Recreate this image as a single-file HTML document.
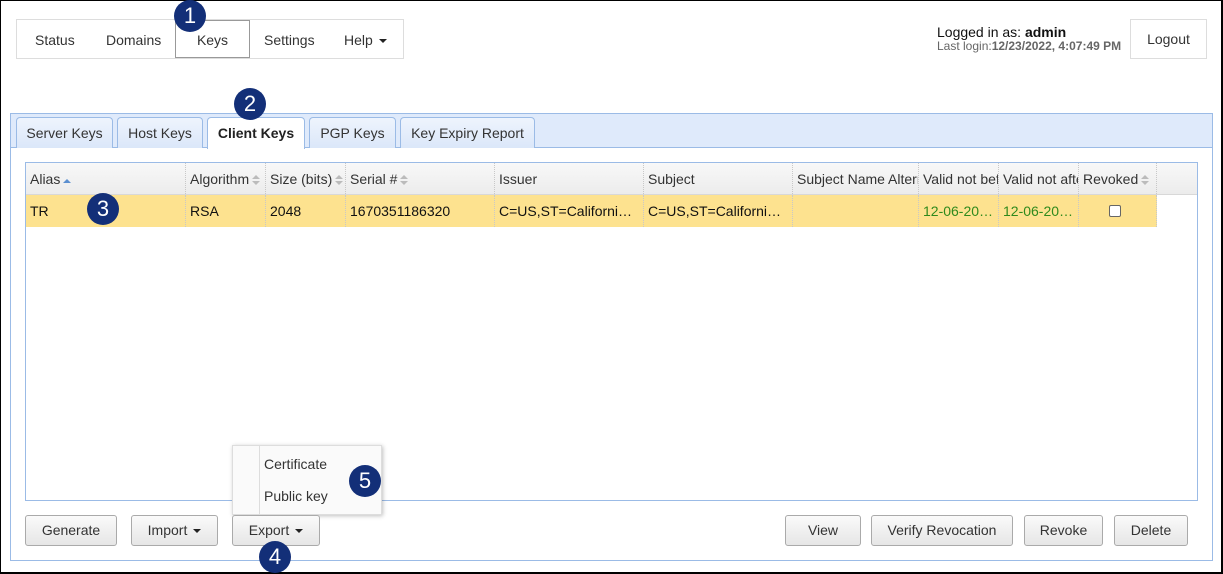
<!DOCTYPE html>
<html><head><meta charset="utf-8"><style>
*{box-sizing:border-box;margin:0;padding:0}
body{width:1223px;height:574px;position:relative;background:#fff;font-family:"Liberation Sans",Arial,sans-serif;font-size:14px;color:#333;overflow:hidden}
.a{position:absolute}
.frame{left:0;top:0;width:1223px;height:574px;border:2px solid #000;border-top-width:1px;border-left-width:1px}
.nav{left:16px;top:19px;width:388px;height:40px;border:1px solid #ddd}
.nav span{position:absolute;top:12px;font-size:14px;color:#333}
.keys{left:175px;top:20px;width:75px;height:38px;border:1px solid #999;text-align:center;line-height:38px}
.badge{width:32px;height:32px;border-radius:50%;background:#132f78;color:#fff;font-size:22px;text-align:center;line-height:32px}
.caret{display:inline-block;width:0;height:0;border-left:4px solid transparent;border-right:4px solid transparent;border-top:4px solid #222;vertical-align:middle;margin-left:6px}
.panel{left:10px;top:113px;width:1203px;height:448px;border:1px solid #9bbbe6}
.phead{left:11px;top:114px;width:1201px;height:34px;background:#dfeafb;border-bottom:1px solid #9bbbe6}
.tab{position:absolute;top:117px;height:31px;border:1px solid #9bbbe6;border-bottom:none;border-radius:4px 4px 0 0;background:linear-gradient(#eef4fd,#dbe7f9);text-align:center;line-height:30px;color:#333}
.tab.act{background:#fff;height:32px;font-weight:bold;color:#222}
.grid{left:25px;top:162px;width:1173px;height:339px;border:1px solid #9bbbe6}
.gh{left:26px;top:163px;width:1171px;height:32px;background:linear-gradient(#f8f8f8,#ececec);border-bottom:1px solid #d8d8d8}
.row{left:26px;top:195px;width:1131px;height:32px;background:#fde28f}
.c{position:absolute;top:0;height:100%;border-right:1px dotted #c8c8c8;padding-left:4px;line-height:32px;white-space:nowrap;overflow:hidden}
.sa{display:inline-block;width:8px;vertical-align:middle;margin-left:3px}
.btn{position:absolute;top:515px;height:31px;border:1px solid #aaa;border-radius:3px;background:linear-gradient(#fafafa,#e6e6e6);text-align:center;line-height:29px;color:#333}
.menu{left:232px;top:445px;width:150px;height:70px;background:#fafafa;border:1px solid #ddd;box-shadow:1px 1px 4px rgba(0,0,0,.25)}
</style></head><body>
<div class="a frame"></div>
<div class="a nav"><span style="left:18px">Status</span><span style="left:89px">Domains</span><span style="left:247px">Settings</span><span style="left:327px">Help<i class="caret"></i></span></div>
<div class="a keys">Keys</div>
<div class="a badge" style="left:174px;top:0px">1</div>
<div class="a" style="left:937px;top:24px;font-size:14px;color:#111">Logged in as: <b>admin</b></div>
<div class="a" style="left:937px;top:39px;font-size:12px;color:#666">Last login:<b>12/23/2022, 4:07:49 PM</b></div>
<div class="a" style="left:1130px;top:19px;width:77px;height:40px;border:1px solid #ddd;text-align:center;line-height:38px;color:#333">Logout</div>

<div class="a panel"></div>
<div class="a phead"></div>
<div class="tab" style="left:16px;width:97px">Server Keys</div>
<div class="tab" style="left:117px;width:86px">Host Keys</div>
<div class="tab act" style="left:207px;width:98px">Client Keys</div>
<div class="tab" style="left:309px;width:87px">PGP Keys</div>
<div class="tab" style="left:400px;width:135px">Key Expiry Report</div>
<div class="a badge" style="left:234px;top:88px">2</div>

<div class="a grid"></div>
<div class="a gh">
<div class="c" style="left:0;width:160px">Alias<svg class="sa" width="8" height="5"><path d="M0 5L4 1L8 5Z" fill="#5b8fd0"/></svg></div>
<div class="c" style="left:160px;width:80px">Algorithm<svg class="sa" width="8" height="10"><path d="M0 4L4 0L8 4ZM0 6L4 10L8 6Z" fill="#bbb"/></svg></div>
<div class="c" style="left:240px;width:80px">Size (bits)<svg class="sa" width="8" height="10"><path d="M0 4L4 0L8 4ZM0 6L4 10L8 6Z" fill="#bbb"/></svg></div>
<div class="c" style="left:320px;width:149px">Serial #<svg class="sa" width="8" height="10"><path d="M0 4L4 0L8 4ZM0 6L4 10L8 6Z" fill="#bbb"/></svg></div>
<div class="c" style="left:469px;width:149px">Issuer</div>
<div class="c" style="left:618px;width:149px">Subject</div>
<div class="c" style="left:767px;width:126px">Subject Name Alternative</div>
<div class="c" style="left:893px;width:80px">Valid not before</div>
<div class="c" style="left:973px;width:80px">Valid not after</div>
<div class="c" style="left:1053px;width:78px">Revoked<svg class="sa" width="8" height="10"><path d="M0 4L4 0L8 4ZM0 6L4 10L8 6Z" fill="#bbb"/></svg></div>
</div>
<div class="a row" style="color:#111">
<div class="c" style="left:0;width:160px">TR</div>
<div class="c" style="left:160px;width:80px">RSA</div>
<div class="c" style="left:240px;width:80px">2048</div>
<div class="c" style="left:320px;width:149px">1670351186320</div>
<div class="c" style="left:469px;width:149px">C=US,ST=Californi…</div>
<div class="c" style="left:618px;width:149px">C=US,ST=Californi…</div>
<div class="c" style="left:767px;width:126px"></div>
<div class="c" style="left:893px;width:80px;color:#2f8a1c">12-06-20…</div>
<div class="c" style="left:973px;width:80px;color:#2f8a1c">12-06-20…</div>
<div class="c" style="left:1053px;width:78px"><div style="position:absolute;left:30px;top:10px;width:12px;height:12px;border:1px solid #666;border-radius:2px;background:#fff"></div></div>
</div>
<div class="a badge" style="left:87px;top:193px">3</div>

<div class="a menu"><div style="position:absolute;left:26px;top:0;width:1px;height:100%;background:#ddd"></div>
<div style="position:absolute;left:31px;top:10px;font-size:14px">Certificate</div>
<div style="position:absolute;left:31px;top:42px;font-size:14px">Public key</div></div>
<div class="a badge" style="left:349px;top:465px">5</div>

<div class="btn" style="left:25px;width:92px">Generate</div>
<div class="btn" style="left:131px;width:87px">Import<i class="caret"></i></div>
<div class="btn" style="left:232px;width:88px">Export<i class="caret"></i></div>
<div class="btn" style="left:785px;width:76px">View</div>
<div class="btn" style="left:871px;width:142px">Verify Revocation</div>
<div class="btn" style="left:1024px;width:79px">Revoke</div>
<div class="btn" style="left:1114px;width:74px">Delete</div>
<div class="a badge" style="left:259px;top:541px">4</div>
</body></html>
